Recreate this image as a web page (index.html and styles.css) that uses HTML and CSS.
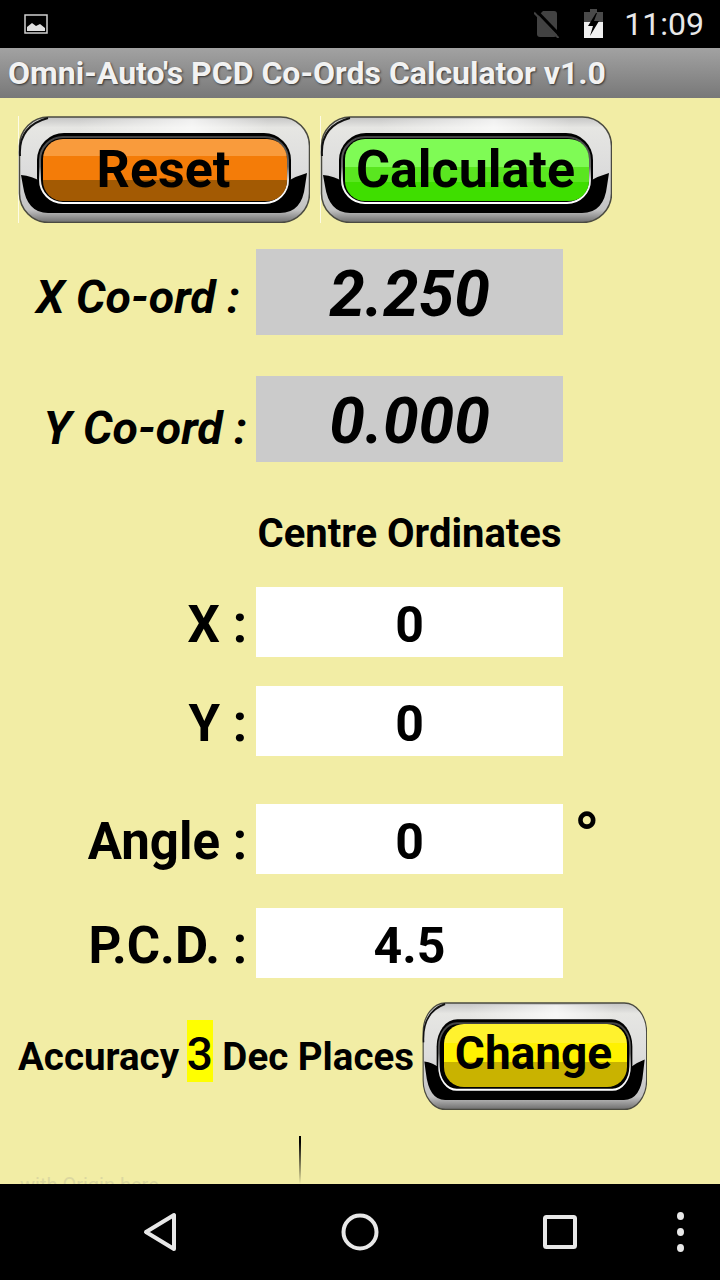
FILE: index.html
```html
<!DOCTYPE html>
<html lang="en">
<head>
    <meta charset="UTF-8">
    <meta name="viewport" content="width=device-width, initial-scale=1.0">
    <title>Omni-Auto's PCD Co-Ords Calculator v1.0</title>
    <link rel="stylesheet" href="styles.css">
</head>
<body>
    <svg class="defs" width="0" height="0">
        <defs>
            <linearGradient id="chrome" x1="0" y1="0" x2="0" y2="1">
                <stop offset="0" stop-color="#c4c4c4"/>
                <stop offset="0.1" stop-color="#e6e6e3"/>
                <stop offset="0.5" stop-color="#dcdcdc"/>
                <stop offset="0.88" stop-color="#c2c2c2"/>
                <stop offset="1" stop-color="#6e6e6e"/>
            </linearGradient>
            <linearGradient id="shine" x1="0" y1="0" x2="1" y2="0">
                <stop offset="0" stop-color="#fff" stop-opacity="0"/>
                <stop offset="0.6" stop-color="#fff" stop-opacity="0.7"/>
                <stop offset="1" stop-color="#fff" stop-opacity="0"/>
            </linearGradient>
            <linearGradient id="ring" x1="0" y1="0" x2="0" y2="1">
                <stop offset="0" stop-color="#444"/>
                <stop offset="0.45" stop-color="#666"/>
                <stop offset="0.7" stop-color="#eee"/>
                <stop offset="1" stop-color="#fff"/>
            </linearGradient>
            <symbol id="bezel" viewBox="0 0 292 107" preserveAspectRatio="none">
                <rect x="1.5" y="1" width="290" height="105.5" rx="29" fill="url(#chrome)" stroke="#4a4a40" stroke-width="1.5"/>
                <path d="M2 40 Q0 10 30 2" fill="none" stroke="#111" stroke-width="2"/>
                <rect x="60" y="3" width="190" height="14" fill="url(#shine)"/>
                <path d="M3 59 Q14 60 24 66 L268 66 Q278 60 289 57 L287 70 Q284 97 262 97 L30 97 Q9 97 5 70 Z" fill="#000"/>
                <rect x="19" y="17" width="254" height="72" rx="27" fill="#000"/>
                <rect x="22" y="21" width="248" height="66" rx="23" fill="none" stroke="url(#ring)" stroke-width="2"/>
            </symbol>
        </defs>
    </svg>

    <div class="status-bar">
        <svg class="status-pic" viewBox="0 0 24 20" width="24" height="20">
            <rect x="1" y="1" width="22" height="18" fill="none" stroke="#d0d0d0" stroke-width="1.5"/>
            <path d="M3 17 V13 L8 9 L12 12 L16 10 L21 14 V17 Z" fill="#e0e0e0"/>
        </svg>
        <div class="status-right">
            <svg viewBox="0 0 26 28" width="26" height="28">
                <path d="M9 1 H20 Q23 1 23 4 V24 Q23 27 20 27 H6 Q3 27 3 24 V7 Z" fill="#424242"/>
                <path d="M1.5 0 L25.5 25" stroke="#000" stroke-width="3"/>
                <path d="M0 2.5 L24.5 28" stroke="#424242" stroke-width="2"/>
            </svg>
            <svg class="status-batt" viewBox="0 0 20 30" width="20" height="30">
                <path d="M6 0 H13 V3 H19 V13 H0 V3 H6 Z" fill="#4a4a4a"/>
                <path d="M0 13 H19 V29 H0 Z" fill="#f0f0f0"/>
                <path d="M12 4 L4 17 H9 L6 27 L15 12 H10 L13 4 Z" fill="#000"/>
            </svg>
            <span class="clock">11:09</span>
        </div>
    </div>

    <div class="title-bar">Omni-Auto's PCD Co-Ords Calculator v1.0</div>

    <div class="content">
        <div class="btn-row">
            <div class="btn btn-reset">
                <svg class="bezel"><use href="#bezel" width="100%" height="100%"/></svg>
                <div class="btn-face">Reset</div>
            </div>
            <div class="btn btn-calc">
                <svg class="bezel"><use href="#bezel" width="100%" height="100%"/></svg>
                <div class="btn-face">Calculate</div>
            </div>
        </div>

        <div class="row row-result row-x">
            <div class="label label-result label-x"><span>X Co-ord :</span></div>
            <div class="value value-result">2.250</div>
        </div>
        <div class="row row-result row-y">
            <div class="label label-result label-y"><span>Y Co-ord :</span></div>
            <div class="value value-result">0.000</div>
        </div>

        <div class="centre-title">Centre Ordinates</div>

        <div class="row row-cx">
            <div class="label">X :</div>
            <div class="value">0</div>
        </div>
        <div class="row row-cy">
            <div class="label">Y :</div>
            <div class="value">0</div>
        </div>
        <div class="row row-angle">
            <div class="label">Angle :</div>
            <div class="value">0</div>
            <div class="degree">°</div>
        </div>
        <div class="row row-pcd">
            <div class="label">P.C.D. :</div>
            <div class="value">4.5</div>
        </div>

        <div class="accuracy-row">
            <div class="accuracy-text">Accuracy <span class="places">3</span> Dec Places</div>
            <div class="btn btn-change">
                <svg class="bezel"><use href="#bezel" width="100%" height="100%"/></svg>
                <div class="btn-face">Change</div>
            </div>
        </div>

        <div class="below">
            <div class="origin-note">with Origin here</div>
            <div class="tick"></div>
        </div>
        <div class="fade"></div>
    </div>

    <div class="nav-bar">
        <svg class="nav-back" viewBox="0 0 34 40" width="34" height="40">
            <path d="M31 3 V37 L3 20 Z" fill="none" stroke="#e8e8e8" stroke-width="4" stroke-linejoin="round"/>
        </svg>
        <svg class="nav-home" viewBox="0 0 38 38" width="38" height="38">
            <circle cx="19" cy="19" r="16.5" fill="none" stroke="#e8e8e8" stroke-width="4"/>
        </svg>
        <svg class="nav-recent" viewBox="0 0 34 34" width="34" height="34">
            <rect x="2" y="2" width="30" height="30" rx="1.5" fill="none" stroke="#e8e8e8" stroke-width="4"/>
        </svg>
        <div class="nav-menu"><i></i><i></i><i></i></div>
    </div>
</body>
</html>
```

FILE: styles.css
```css
* {
    box-sizing: border-box;
}

html, body {
    margin: 0;
    padding: 0;
}

body {
    width: 720px;
    height: 1280px;
    overflow: hidden;
    display: flex;
    flex-direction: column;
    font-family: "Roboto", "Liberation Sans", sans-serif;
    font-weight: 700;
    background-color: #000;
    color: #000;
}

.defs {
    position: absolute;
}

.status-bar {
    height: 48px;
    flex: none;
    background-color: #000;
    display: flex;
    align-items: center;
    justify-content: space-between;
    padding: 0 16px 0 24px;
}

.status-right {
    display: flex;
    align-items: center;
}

.status-batt {
    margin-left: 24px;
}

.clock {
    margin-left: 20px;
    font-size: 32px;
    font-weight: 400;
    color: #e8e8e8;
}

.title-bar {
    height: 50px;
    flex: none;
    padding: 0 0 1px 8px;
    display: flex;
    align-items: center;
    background: linear-gradient(#a2a2a2, #787878);
    color: #f2f2f2;
    font-size: 32px;
    white-space: nowrap;
    text-shadow: 1px 1px 2px #333;
}

.content {
    position: relative;
    height: 1086px;
    flex: none;
    overflow: hidden;
    padding-top: 18px;
    background-color: #f2eda5;
}

.btn-row {
    display: flex;
    gap: 10px;
    padding-left: 18px;
}

.btn {
    position: relative;
    flex: none;
    display: flex;
}

.btn-reset,
.btn-calc {
    width: 292px;
    height: 107px;
    padding: 23px 23px 22px 25px;
    box-shadow: inset 1px 0 #fdfbe6;
}

.btn-change {
    width: 225px;
    height: 108px;
    padding: 22px 20px 23px 22px;
}

.bezel {
    position: absolute;
    left: 0;
    top: 0;
    width: 100%;
    height: 100%;
}

.btn-face {
    position: relative;
    flex: 1;
    display: flex;
    align-items: center;
    justify-content: center;
    border-radius: 20px;
    font-size: 52px;
    padding: 0 3px 2px 0;
}

.btn-reset .btn-face {
    background: linear-gradient(#f99b3c 0, #f99b3c 27%, #f47c08 27%, #f47c08 66%, #a35a03 66%, #a35a03 100%);
}

.btn-calc .btn-face {
    background: linear-gradient(#7ffb55 0, #7ffb55 45%, #5ae620 45%, #5ae620 70%, #3fde00 70%, #3fde00 100%);
}

.btn-change .btn-face {
    background: linear-gradient(#fff22e 0, #fff22e 30%, #fff200 30%, #fff200 60%, #c9b300 60%, #c9b300 100%);
    font-size: 46px;
    padding: 0 4px 6px 0;
}

.row {
    display: flex;
    align-items: center;
    height: 70px;
}

.label {
    width: 247px;
    flex: none;
    padding-top: 5px;
    text-align: right;
    font-size: 51px;
    line-height: 70px;
    white-space: nowrap;
}

.value {
    width: 307px;
    height: 100%;
    flex: none;
    margin-left: 9px;
    padding-top: 5px;
    display: flex;
    align-items: center;
    justify-content: center;
    background-color: #fff;
    font-size: 50px;
}

.row-result {
    height: 86px;
}

.row-x {
    margin-top: 26px;
}

.row-y {
    margin-top: 41px;
}

.label-result {
    font-size: 46.5px;
    font-style: italic;
}

.label-x {
    padding: 10px 7px 0 0;
}

.label-y {
    padding-top: 18px;
}

.value-result {
    background-color: #cbcbcb;
    font-size: 64px;
    font-style: italic;
}

.centre-title {
    margin: 53px 0 0 256px;
    width: 307px;
    height: 38px;
    line-height: 38px;
    text-align: center;
    font-size: 40px;
    white-space: nowrap;
}

.row-cx {
    margin-top: 34px;
}

.row-cy {
    margin-top: 29px;
}

.row-angle {
    margin-top: 48px;
}

.row-pcd {
    margin-top: 34px;
}

.degree {
    font-size: 66px;
    margin-left: 11px;
    line-height: 1;
    align-self: flex-start;
}

.accuracy-row {
    margin-top: 24px;
    padding-left: 18px;
    display: flex;
    align-items: center;
}

.accuracy-text {
    width: 404px;
    flex: none;
    padding-bottom: 10px;
    font-size: 38.5px;
    white-space: nowrap;
}

.places {
    display: inline-block;
    margin-left: -2px;
    background-color: #ffff00;
    font-size: 46px;
    font-weight: 500;
    line-height: 55px;
    padding-top: 7px;
}

.below {
    position: relative;
    height: 74px;
}

.origin-note {
    position: absolute;
    z-index: 1;
    left: 20px;
    top: 63px;
    font-size: 20px;
    font-weight: 400;
    white-space: nowrap;
    color: #dcd8a0;
}

.tick {
    position: absolute;
    left: 299px;
    top: 26px;
    width: 2px;
    height: 48px;
    background-color: #000;
}

.fade {
    position: absolute;
    left: 0;
    right: 0;
    bottom: 0;
    height: 42px;
    background: linear-gradient(rgba(242, 237, 165, 0), #f2eda5);
}

.nav-bar {
    height: 96px;
    flex: none;
    position: relative;
    background-color: #000;
    display: flex;
    align-items: center;
    padding-left: 143px;
}

.nav-home {
    margin-left: 164px;
}

.nav-recent {
    margin-left: 164px;
}

.nav-menu {
    margin-left: 100px;
    display: flex;
    flex-direction: column;
    gap: 8px;
}

.nav-menu i {
    display: block;
    width: 7px;
    height: 8px;
    border-radius: 50%;
    background-color: #e8e8e8;
}
```
